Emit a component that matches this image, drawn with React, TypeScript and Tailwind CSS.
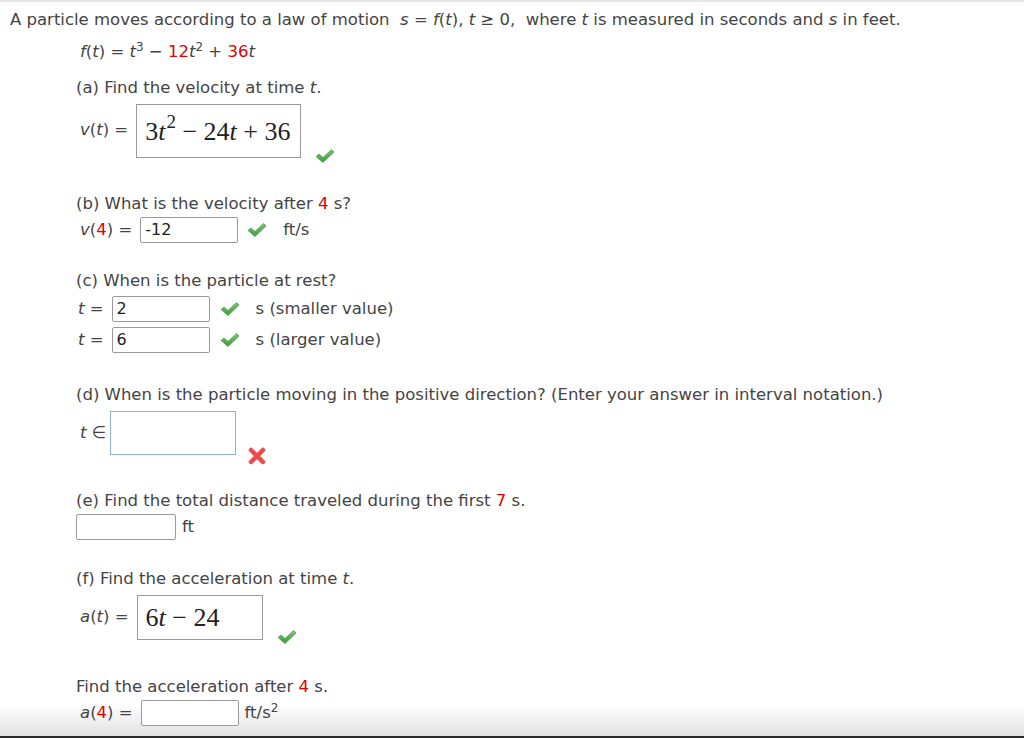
import React from 'react';

const font = { fontFamily: '"DejaVu Sans", Verdana, sans-serif' };

function Check() {
  return (
    <svg width="20" height="16" viewBox="0 0 20 16" className="shrink-0">
      <defs>
        <linearGradient id="ck" x1="0" y1="0" x2="0" y2="1">
          <stop offset="0" stopColor="#7cc576" />
          <stop offset="1" stopColor="#3f9a3a" />
        </linearGradient>
      </defs>
      <path d="M1 8.5 L4 6 L8 9.5 L16.5 1.5 L19 4 L8 14.5 Z" fill="url(#ck)" strokeLinejoin="round" stroke="#4ea449" strokeWidth="0.8" />
    </svg>
  );
}

function Cross() {
  return (
    <svg width="18" height="18" viewBox="0 0 18 18" className="shrink-0">
      <path d="M3 3 L15 15 M15 3 L3 15" stroke="#ef4b4b" strokeWidth="4.5" strokeLinecap="round" />
    </svg>
  );
}

function R({ children }: { children: React.ReactNode }) {
  return <span className="text-[#e00000]">{children}</span>;
}

function I({ children }: { children: React.ReactNode }) {
  return <i>{children}</i>;
}

function Sup({ children }: { children: React.ReactNode }) {
  return <sup className="text-[12px]">{children}</sup>;
}

function Field({ w, value }: { w: string; value?: string }) {
  return (
    <div className={`${w} h-[26px] shrink-0 rounded-[2px] border border-[#9a9a9a] bg-white px-[4px] text-[16px] leading-[24px] text-[#222]`}>
      {value}
    </div>
  );
}

function MathBox({ w, h, children }: { w: string; h: string; children: React.ReactNode }) {
  return (
    <div
      className={`${w} ${h} shrink-0 whitespace-nowrap border border-[#9a9a9a] flex items-center px-[8px] text-[26px] text-[#222]`}
      style={{ fontFamily: '"Liberation Serif", "Times New Roman", serif' }}
    >
      {children}
    </div>
  );
}

export default function App() {
  return (
    <div className="relative w-[1024px] h-[738px] overflow-hidden bg-white text-[16.5px] text-[#444]" style={font}>
      <div className="absolute left-0 right-0 bottom-[2px] h-[32px] bg-gradient-to-b from-white to-[#e2e2e2]" />
      <div className="absolute left-0 right-0 bottom-0 h-[2px] bg-[#2a2a2a]" />

      <div className="relative">
        <div className="h-[2px] bg-[#e6e6e6]" />
        <div className="pl-[10px] pt-[8px] leading-[20px]">
          A particle moves according to a law of motion&nbsp; <I>s</I> = <I>f</I>(<I>t</I>), <I>t</I> ≥ 0,&nbsp; where <I>t</I> is measured in seconds and <I>s</I> in feet.
        </div>

        <div className="pl-[76px]">
          <div className="mt-[12px] pl-[4px] leading-[20px]">
            <I>f</I>(<I>t</I>) = <I>t</I><Sup>3</Sup> − <R>12</R><I>t</I><Sup>2</Sup> + <R>36</R><I>t</I>
          </div>

          <div className="mt-[16px] leading-[20px]">
            (a) Find the velocity at time <I>t</I>.
          </div>
          <div className="mt-[6px] flex items-start">
            <div className="flex items-center h-[53px] pl-[4px] pr-[8px]">
              <span><I>v</I>(<I>t</I>) =</span>
            </div>
            <MathBox w="w-[165px]" h="h-[54px]">
              <span>3<i>t</i><sup className="ml-[1px] text-[19px] relative top-[-0.62em]">2</sup> − 24<i>t</i> + 36</span>
            </MathBox>
            <div className="ml-[14px] mt-[44px]"><Check /></div>
          </div>

          <div className="mt-[30px] leading-[20px]">
            (b) What is the velocity after <R>4</R> s?
          </div>
          <div className="mt-[3px] flex items-center">
            <span className="pl-[4px] pr-[8px]"><I>v</I>(<R>4</R>) =</span>
            <Field w="w-[98px]" value="-12" />
            <div className="ml-[9px] mr-[16px]"><Check /></div>
            <span>ft/s</span>
          </div>

          <div className="mt-[28px] leading-[20px]">(c) When is the particle at rest?</div>
          <div className="mt-[5px] flex items-center">
            <span className="pr-[8px] pl-[2px]"><I>t</I> =</span>
            <Field w="w-[98px]" value="2" />
            <div className="ml-[10px] mr-[16px]"><Check /></div>
            <span>s (smaller value)</span>
          </div>
          <div className="mt-[5px] flex items-center">
            <span className="pr-[8px] pl-[2px]"><I>t</I> =</span>
            <Field w="w-[98px]" value="6" />
            <div className="ml-[10px] mr-[16px]"><Check /></div>
            <span>s (larger value)</span>
          </div>

          <div className="mt-[32px] leading-[20px]">
            (d) When is the particle moving in the positive direction? (Enter your answer in interval notation.)
          </div>
          <div className="mt-[6px] flex items-start">
            <div className="flex items-center h-[44px] pl-[4px] pr-[4px]">
              <span><I>t</I> ∈</span>
            </div>
            <div className="w-[126px] h-[44px] shrink-0 border border-[#8fb3dc] bg-white" />
            <div className="ml-[12px] mt-[36px]"><Cross /></div>
          </div>

          <div className="mt-[26px] leading-[20px]">
            (e) Find the total distance traveled during the first <R>7</R> s.
          </div>
          <div className="mt-[3px] flex items-center">
            <Field w="w-[100px]" />
            <span className="ml-[6px]">ft</span>
          </div>

          <div className="mt-[29px] leading-[20px]">
            (f) Find the acceleration at time <I>t</I>.
          </div>
          <div className="mt-[6px] flex items-start">
            <div className="flex items-center h-[44px] pl-[4px] pr-[8px]">
              <span><I>a</I>(<I>t</I>) =</span>
            </div>
            <MathBox w="w-[126px]" h="h-[45px]">
              <span>6<i>t</i> − 24</span>
            </MathBox>
            <div className="ml-[14px] mt-[34px]"><Check /></div>
          </div>

          <div className="mt-[32px] leading-[20px]">
            Find the acceleration after <R>4</R> s.
          </div>
          <div className="mt-[3px] flex items-center">
            <span className="pl-[4px] pr-[8px]"><I>a</I>(<R>4</R>) =</span>
            <Field w="w-[98px]" />
            <span className="ml-[6px]">ft/s<Sup>2</Sup></span>
          </div>
        </div>
      </div>
    </div>
  );
}
